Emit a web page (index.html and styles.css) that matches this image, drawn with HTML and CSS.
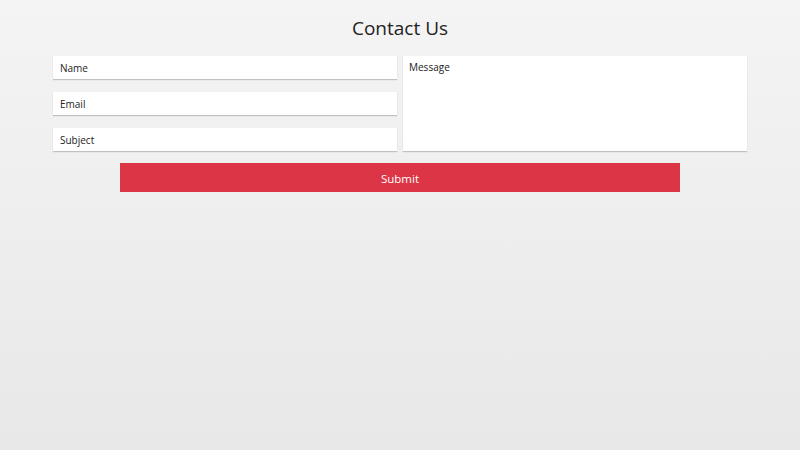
FILE: index.html
```html
<!DOCTYPE html>
<html lang="en">
<head>
  <meta charset="UTF-8">
  <meta name="viewport" content="width=device-width, initial-scale=1.0">
  <title>Contact Us</title>
  <link rel="stylesheet" href="styles.css">
</head>
<body>

  <h1>Contact Us</h1>

  <form class="contact">
    <div class="fields">
      <div class="left">
        <input type="text" placeholder="Name">
        <input type="email" placeholder="Email">
        <input type="text" placeholder="Subject">
      </div>
      <textarea placeholder="Message"></textarea>
    </div>
    <button type="button" class="submit">Submit</button>
  </form>

</body>
</html>
```

FILE: styles.css
```css
html {
  min-height: 100%;
  background: linear-gradient(#f4f4f4, #e8e8e8);
}
body {
  margin: 0;
  min-height: 450px;
  font-family: "Open Sans", "Noto Sans", sans-serif;
  color: #222;
}
h1 {
  margin: 0;
  padding-top: 13px;
  font-size: 19px;
  font-weight: 400;
  text-align: center;
  line-height: 30px;
}
.contact {
  width: 694px;
  margin: 13px auto 0;
}
.fields {
  display: grid;
  grid-template-columns: 1fr 1fr;
  gap: 6px;
}
.left {
  min-width: 0;
  display: flex;
  flex-direction: column;
  gap: 13px;
}
input, textarea {
  font-family: inherit;
  font-size: 10px;
  color: #222;
  background: #fff;
  border: none;
  outline: none;
  box-shadow: 0 1px 1px rgba(0,0,0,0.2);
  padding: 4px 7px;
  box-sizing: border-box;
}
input {
  height: 23px;
}
textarea {
  width: 100%;
  height: 95px;
  resize: none;
  padding: 4px 6px;
}
::placeholder {
  color: #222;
  opacity: 1;
}
.submit {
  display: block;
  width: 560px;
  height: 29px;
  margin: 12px auto 0;
  padding-top: 2px;
  background: #dc3545;
  color: #fff;
  border: none;
  font-family: inherit;
  font-size: 11.5px;
  cursor: pointer;
}
```
